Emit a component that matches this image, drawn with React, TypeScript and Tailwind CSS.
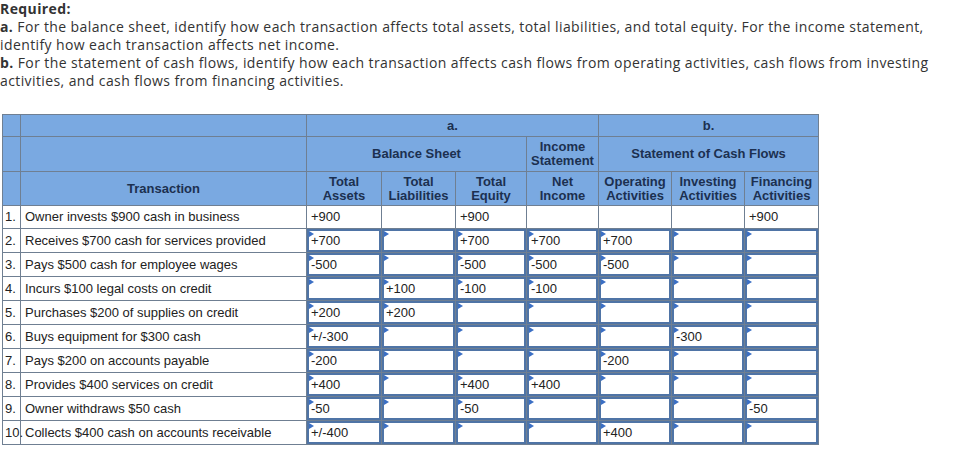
import React from "react";

type Row = { n: string; label: string; vals: string[] };

const rows: Row[] = [
  { n: "1.", label: "Owner invests $900 cash in business", vals: ["+900", "", "+900", "", "", "", "+900"] },
  { n: "2.", label: "Receives $700 cash for services provided", vals: ["+700", "", "+700", "+700", "+700", "", ""] },
  { n: "3.", label: "Pays $500 cash for employee wages", vals: ["-500", "", "-500", "-500", "-500", "", ""] },
  { n: "4.", label: "Incurs $100 legal costs on credit", vals: ["", "+100", "-100", "-100", "", "", ""] },
  { n: "5.", label: "Purchases $200 of supplies on credit", vals: ["+200", "+200", "", "", "", "", ""] },
  { n: "6.", label: "Buys equipment for $300 cash", vals: ["+/-300", "", "", "", "", "-300", ""] },
  { n: "7.", label: "Pays $200 on accounts payable", vals: ["-200", "", "", "", "-200", "", ""] },
  { n: "8.", label: "Provides $400 services on credit", vals: ["+400", "", "+400", "+400", "", "", ""] },
  { n: "9.", label: "Owner withdraws $50 cash", vals: ["-50", "", "-50", "", "", "", "-50"] },
  { n: "10.", label: "Collects $400 cash on accounts receivable", vals: ["+/-400", "", "", "", "+400", "", ""] },
];

const th = "border border-[#6f7f92] bg-[#7aa9e1] text-[#1c3050] font-bold text-[13px] leading-[14px] text-center align-middle p-0";
const td = "border border-[#6f7f92] p-0 h-[23px] text-[13px] text-[#222] align-middle whitespace-nowrap";

function InputCell({ value }: { value: string }) {
  return (
    <td className={td}>
      <div className="relative h-[23px] border-2 border-[#4f74a6] bg-white pl-[2px] flex items-center">
        <span className="absolute top-0 left-0 w-0 h-0 border-y-[3px] border-y-transparent border-l-[5px] border-l-[#3b6fc4]" />
        {value}
      </div>
    </td>
  );
}

export default function App() {
  return (
    <div className="bg-white w-[965px] h-[453px] text-[#333]" style={{ fontFamily: "'Open Sans', sans-serif" }}>
      <div className="text-[14px] leading-[18px] tracking-[0.4px] whitespace-nowrap">
        <div className="font-bold">Required:</div>
        <div>
          <b>a.</b> For the balance sheet, identify how each transaction affects total assets, total liabilities, and total equity. For the income statement,
        </div>
        <div>identify how each transaction affects net income.</div>
        <div>
          <b>b.</b> For the statement of cash flows, identify how each transaction affects cash flows from operating activities, cash flows from investing
        </div>
        <div>activities, and cash flows from financing activities.</div>
      </div>

      <table
        className="mt-[24px] ml-[2px] border-collapse table-fixed w-[816px]"
        style={{ fontFamily: "Arial, 'Liberation Sans', sans-serif" }}
      >
        <colgroup>
          <col className="w-[18px]" />
          <col className="w-[286px]" />
          <col className="w-[75px]" />
          <col className="w-[74px]" />
          <col className="w-[71px]" />
          <col className="w-[72px]" />
          <col className="w-[73px]" />
          <col className="w-[73px]" />
          <col className="w-[74px]" />
        </colgroup>
        <thead>
          <tr className="h-[22px]">
            <th className={th}></th>
            <th className={th}></th>
            <th className={th} colSpan={4}>a.</th>
            <th className={th} colSpan={3}>b.</th>
          </tr>
          <tr className="h-[35px]">
            <th className={th}></th>
            <th className={th}></th>
            <th className={th} colSpan={3}>Balance Sheet</th>
            <th className={th}>Income<br />Statement</th>
            <th className={th} colSpan={3}>Statement of Cash Flows</th>
          </tr>
          <tr className="h-[34px]">
            <th className={th}></th>
            <th className={th}>Transaction</th>
            <th className={th}>Total<br />Assets</th>
            <th className={th}>Total<br />Liabilities</th>
            <th className={th}>Total<br />Equity</th>
            <th className={th}>Net<br />Income</th>
            <th className={th}>Operating<br />Activities</th>
            <th className={th}>Investing<br />Activities</th>
            <th className={th}>Financing<br />Activities</th>
          </tr>
        </thead>
        <tbody>
          {rows.map((r, i) => (
            <tr key={r.n}>
              <td className={`${td} pl-[2px] overflow-visible`}>{r.n}</td>
              <td className={`${td} pl-[4px]`}>{r.label}</td>
              {r.vals.map((v, j) =>
                i === 0 ? (
                  <td key={j} className={`${td} pl-[4px]`}>{v}</td>
                ) : (
                  <InputCell key={j} value={v} />
                ),
              )}
            </tr>
          ))}
        </tbody>
      </table>
    </div>
  );
}
